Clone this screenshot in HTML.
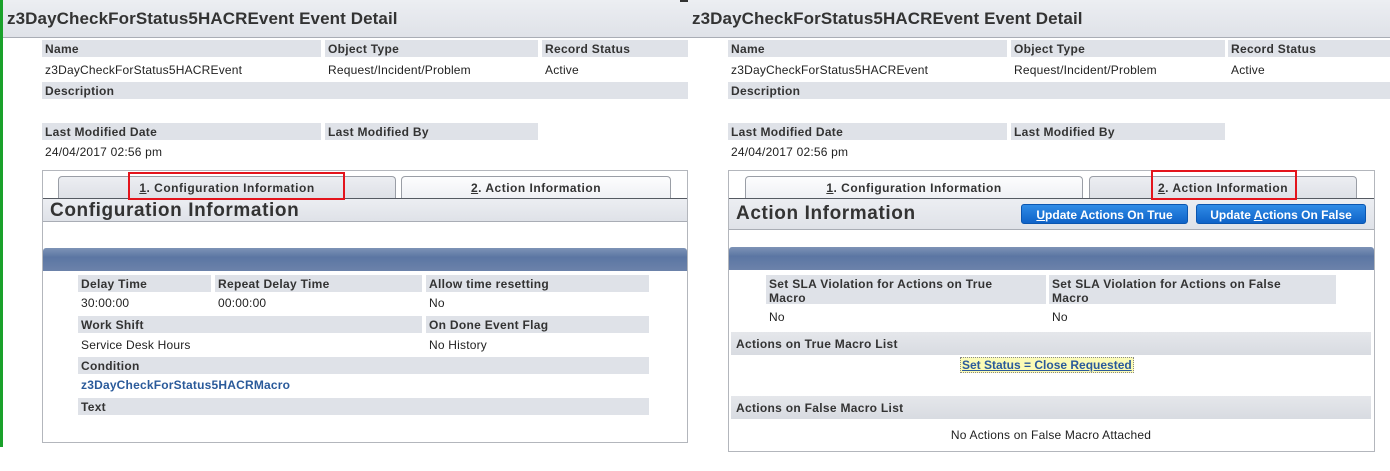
<!DOCTYPE html>
<html><head><style>
*{margin:0;padding:0;box-sizing:border-box}
body{width:1390px;height:471px;background:#fff;font-family:"Liberation Sans",Arial,sans-serif;font-size:12px;color:#222;position:relative;overflow:hidden}
.a{position:absolute}
.hd{height:38px;background:linear-gradient(#eceef2,#dfe2e8);border-bottom:1px solid #a9adb5;font-size:17px;font-weight:bold;color:#333;padding:9px 0 0 4px;letter-spacing:0.1px}
.lb{background:#dfe2e8;height:17px;font-weight:bold;padding:2px 0 0 3px;color:#333;letter-spacing:0.3px}
.v{padding-left:3px;letter-spacing:0.2px}
.box{border:1px solid #b3b6bc;background:#fff}
.tab{height:23px;border:1px solid #9a9ea6;border-bottom:none;border-radius:4px 4px 0 0;text-align:center;font-weight:bold;padding-top:4px;color:#333;letter-spacing:0.5px}
.sel{background:linear-gradient(#eceef2,#dde0e6)}
.un{background:linear-gradient(#fdfdfe,#eef0f4)}
.ch{background:linear-gradient(#eceef2,#dfe2e8);border-top:1px solid #555a62;border-bottom:1px solid #a9adb5;font-weight:bold;color:#333;font-size:19px;letter-spacing:0.6px}
.blue{background:linear-gradient(#7e93b6,#5b76a3 40%,#6c82aa);height:23px;border-radius:3px 3px 0 0}
.red{border:2px solid #e3141c}
.btn{background:linear-gradient(#2f8be6,#0f63c8);color:#fff;font-weight:bold;text-align:center;border:1px solid #0b56b0;border-radius:3px;height:20px;padding-top:3px;font-size:12px}
.gb{background:linear-gradient(#e5e7eb,#d8dbe1);height:23px;font-weight:bold;padding:5px 0 0 5px;color:#333;letter-spacing:0.3px}
u{text-decoration:underline}
</style></head><body>
<div class="a" style="left:0;top:0;width:3px;height:447px;background:#1aa12a"></div>
<!-- LEFT -->
<div class="a hd" style="left:3px;top:0;width:685px">z3DayCheckForStatus5HACREvent Event Detail</div>
<div class="a lb" style="left:42px;top:40px;width:279px">Name</div>
<div class="a lb" style="left:325px;top:40px;width:213px">Object Type</div>
<div class="a lb" style="left:542px;top:40px;width:146px">Record Status</div>
<div class="a v" style="left:42px;top:63px">z3DayCheckForStatus5HACREvent</div>
<div class="a v" style="left:325px;top:63px">Request/Incident/Problem</div>
<div class="a v" style="left:542px;top:63px">Active</div>
<div class="a lb" style="left:42px;top:82px;width:646px">Description</div>
<div class="a lb" style="left:42px;top:123px;width:279px">Last Modified Date</div>
<div class="a lb" style="left:325px;top:123px;width:213px">Last Modified By</div>
<div class="a v" style="left:42px;top:145px">24/04/2017 02:56 pm</div>
<div class="a box" style="left:42px;top:170px;width:646px;height:273px"></div>
<div class="a tab sel" style="left:58px;top:176px;width:338px"><u>1</u>. Configuration Information</div>
<div class="a tab un" style="left:401px;top:176px;width:270px"><u>2</u>. Action Information</div>
<div class="a ch" style="left:43px;top:198px;width:644px;height:24px;padding:1px 0 0 7px">Configuration Information</div>
<div class="a blue" style="left:43px;top:248px;width:644px"></div>
<div class="a red" style="left:128px;top:172px;width:217px;height:28px"></div>
<div class="a lb" style="left:78px;top:275px;width:133px">Delay Time</div>
<div class="a lb" style="left:215px;top:275px;width:207px">Repeat Delay Time</div>
<div class="a lb" style="left:426px;top:275px;width:223px">Allow time resetting</div>
<div class="a v" style="left:78px;top:296px">30:00:00</div>
<div class="a v" style="left:215px;top:296px">00:00:00</div>
<div class="a v" style="left:426px;top:296px">No</div>
<div class="a lb" style="left:78px;top:316px;width:344px">Work Shift</div>
<div class="a lb" style="left:426px;top:316px;width:223px">On Done Event Flag</div>
<div class="a v" style="left:78px;top:338px">Service Desk Hours</div>
<div class="a v" style="left:426px;top:338px">No History</div>
<div class="a lb" style="left:78px;top:357px;width:571px">Condition</div>
<div class="a v" style="left:78px;top:378px;color:#2a5a9a;font-weight:bold">z3DayCheckForStatus5HACRMacro</div>
<div class="a lb" style="left:78px;top:398px;width:571px">Text</div>
<!-- RIGHT -->
<div class="a" style="left:680px;top:0;width:28px;height:2px;background:#333"></div>
<div class="a hd" style="left:688px;top:0;width:702px">z3DayCheckForStatus5HACREvent Event Detail</div>
<div class="a lb" style="left:728px;top:40px;width:279px">Name</div>
<div class="a lb" style="left:1011px;top:40px;width:214px">Object Type</div>
<div class="a lb" style="left:1228px;top:40px;width:162px">Record Status</div>
<div class="a v" style="left:728px;top:63px">z3DayCheckForStatus5HACREvent</div>
<div class="a v" style="left:1011px;top:63px">Request/Incident/Problem</div>
<div class="a v" style="left:1228px;top:63px">Active</div>
<div class="a lb" style="left:728px;top:82px;width:662px">Description</div>
<div class="a lb" style="left:728px;top:123px;width:279px">Last Modified Date</div>
<div class="a lb" style="left:1011px;top:123px;width:214px">Last Modified By</div>
<div class="a v" style="left:728px;top:145px">24/04/2017 02:56 pm</div>
<div class="a box" style="left:728px;top:170px;width:647px;height:282px"></div>
<div class="a tab un" style="left:745px;top:176px;width:338px"><u>1</u>. Configuration Information</div>
<div class="a tab sel" style="left:1089px;top:176px;width:268px"><u>2</u>. Action Information</div>
<div class="a ch" style="left:729px;top:198px;width:645px;height:32px;padding:4px 0 0 7px">Action Information</div>
<div class="a btn" style="left:1021px;top:204px;width:167px"><u>U</u>pdate Actions On True</div>
<div class="a btn" style="left:1196px;top:204px;width:170px">Update <u>A</u>ctions On False</div>
<div class="a blue" style="left:729px;top:247px;width:645px"></div>
<div class="a red" style="left:1151px;top:170px;width:146px;height:30px"></div>
<div class="a lb" style="left:766px;top:275px;width:280px;height:29px;line-height:14px">Set SLA Violation for Actions on True<br>Macro</div>
<div class="a lb" style="left:1049px;top:275px;width:287px;height:29px;line-height:14px">Set SLA Violation for Actions on False<br>Macro</div>
<div class="a v" style="left:766px;top:310px">No</div>
<div class="a v" style="left:1049px;top:310px">No</div>
<div class="a gb" style="left:731px;top:332px;width:640px">Actions on True Macro List</div>
<div class="a" style="left:960px;top:357px;background:#fbfbb6;border:1px dotted #888;color:#2a5a9a;font-weight:bold;text-decoration:underline;padding:0 1px">Set Status = Close Requested</div>
<div class="a gb" style="left:731px;top:396px;width:640px">Actions on False Macro List</div>
<div class="a" style="left:731px;top:428px;width:640px;text-align:center;letter-spacing:0.2px">No Actions on False Macro Attached</div>
</body></html>
